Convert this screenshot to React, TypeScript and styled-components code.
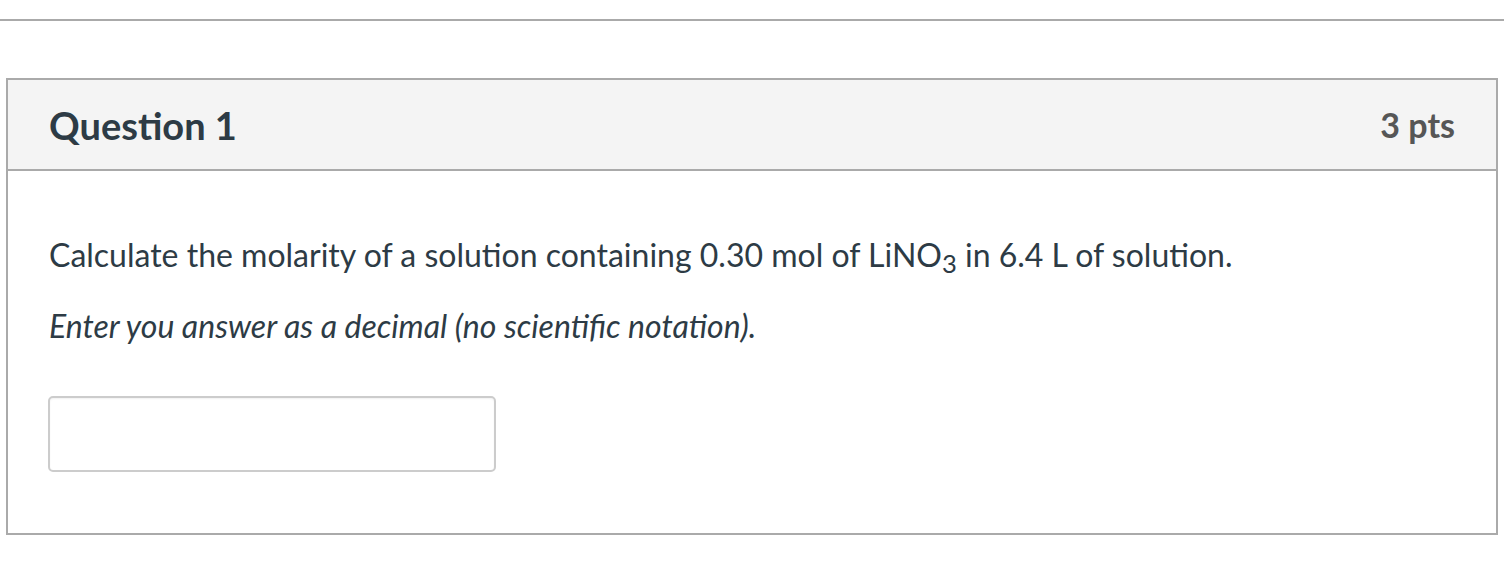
import styled, {createGlobalStyle} from 'styled-components';

const GlobalStyle = createGlobalStyle`
  body {
    margin: 0;
    background: #fff;
    font-family: Lato, "Liberation Sans", sans-serif;
    color: #2d3b45;
  }
`;

export default function App() {
  return (
    <>
      <GlobalStyle />
      <Page>
        <Rule />
        <Card>
          <Header>
            <Title>Question 1</Title>
            <Points>3 pts</Points>
          </Header>
          <Body>
            <Prompt>
              Calculate the molarity of a solution containing 0.30 mol of LiNO<sub>3</sub> in 6.4 L of solution.
            </Prompt>
            <Hint>Enter you answer as a decimal (no scientific notation).</Hint>
            <Answer type="text" />
          </Body>
        </Card>
      </Page>
    </>
  );
}

const Page = styled.div`
  padding-top: 19px;
`;

const Rule = styled.div`
  height: 2px;
  background: #aaaaaa;
`;

const Card = styled.div`
  margin: 57px 6px 0 6px;
  border: 2px solid #aaaaaa;
  height: 457px;
  box-sizing: border-box;
`;

const Header = styled.div`
  display: flex;
  align-items: center;
  justify-content: space-between;
  height: 91px;
  box-sizing: border-box;
  padding: 0 41px 0 41px;
  background: #f4f4f4;
  border-bottom: 2px solid #aaaaaa;
`;

const Title = styled.h2`
  margin: 0;
  font-size: 38px;
  font-weight: 700;
  color: #2d3b45;
`;

const Points = styled.div`
  font-size: 34px;
  font-weight: 700;
  color: #565656;
`;

const Body = styled.div`
  padding: 61px 41px 0 41px;

  sub {
    font-size: 0.8em;
    line-height: 0;
    vertical-align: -0.25em;
  }
`;

const Prompt = styled.p`
  margin: 0;
  font-size: 32px;
  line-height: 46px;
`;

const Hint = styled.p`
  margin: 25px 0 0 0;
  font-size: 32px;
  line-height: 46px;
  font-style: italic;
`;

const Answer = styled.input`
  display: block;
  margin: 47px 0 0 -1px;
  width: 448px;
  height: 76px;
  box-sizing: border-box;
  border: 2px solid #cccccc;
  border-radius: 5px;
  box-shadow: inset 0 1px 2px rgba(0, 0, 0, 0.06);
  background: #fff;
  outline: none;
`;
